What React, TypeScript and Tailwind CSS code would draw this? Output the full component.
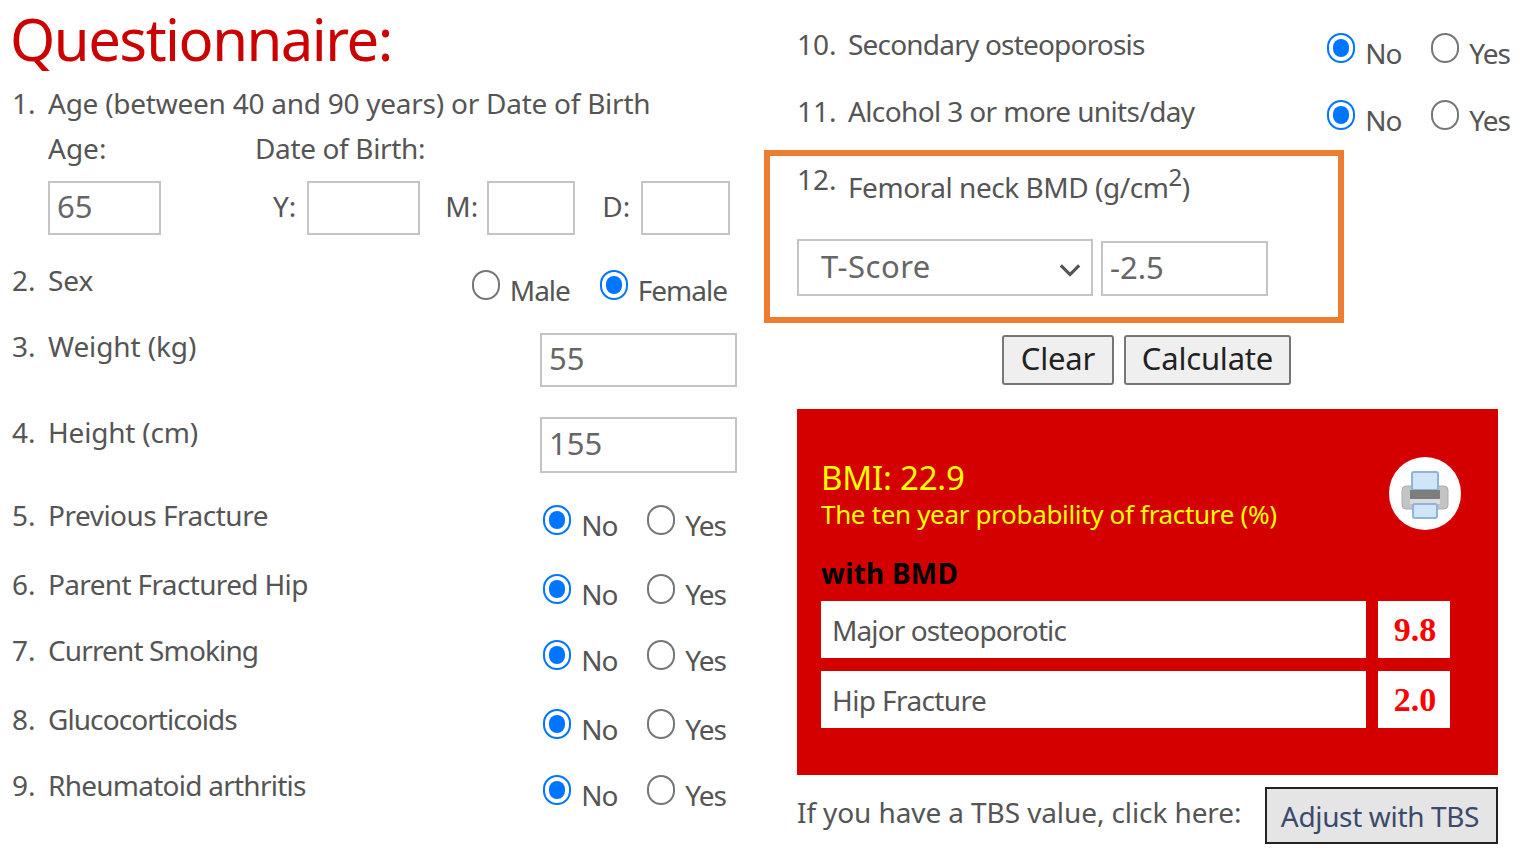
import React from 'react';

const Radio = ({ checked, label, width }: { checked?: boolean; label: string; width?: string }) => (
  <div className={`flex items-start gap-[10px] ${width ?? ''}`}>
    <span
      className={`mt-[-5px] h-[30px] w-[28px] shrink-0 rounded-full border-2 bg-white ${
        checked ? 'border-[#0075ff] p-[4px]' : 'border-[#767676]'
      }`}
    >
      {checked && <span className="block h-full w-full rounded-full bg-[#0075ff]" />}
    </span>
    <span className="text-[#555] leading-[30px] tracking-[-1px] whitespace-nowrap">{label}</span>
  </div>
);

const Question = ({
  n,
  text,
  height,
  track,
  numWidth = 'w-[36px]',
  children,
}: {
  n: string;
  text: string;
  height: string;
  track: string;
  numWidth?: string;
  children?: React.ReactNode;
}) => (
  <div className={`flex items-start ${height}`}>
    <span className={`shrink-0 ${numWidth}`}>{n}</span>
    <span className={`whitespace-nowrap ${track}`}>{text}</span>
    <div className="ml-auto">{children}</div>
  </div>
);

const NoYes = () => (
  <div className="flex pt-[12px]">
    <Radio checked label="No" width="w-[104px]" />
    <Radio label="Yes" />
  </div>
);

const Box = ({ value, className }: { value?: string; className: string }) => (
  <input
    readOnly
    value={value ?? ''}
    className={`border-2 border-[#c4c4c4] bg-white px-[7px] pb-[4px] text-[31px] text-[#666] outline-none ${className}`}
  />
);

const ResultRow = ({ label, value, track }: { label: string; value: string; track: string }) => (
  <div className="flex gap-[12px]">
    <div className={`flex h-[57px] w-[545px] items-center bg-white pl-[11px] text-[#555] ${track}`}>{label}</div>
    <div className="flex h-[57px] w-[72px] items-center justify-center bg-white pl-[2px] font-['Liberation_Serif',serif] text-[34px] font-bold text-[#ff0000]">
      {value}
    </div>
  </div>
);

export default function App() {
  return (
    <div className="flex h-[861px] w-[1536px] overflow-hidden bg-white font-['Noto_Sans',sans-serif] text-[28px] leading-[36px] text-[#555]">
      {/* left column */}
      <div className="flex w-[764px] shrink-0 flex-col pl-[12px] pr-[27px]">
        <h1 className="ml-[-2px] h-[85px] pt-[2px] text-[58px] leading-[74px] tracking-[-1.5px] text-[#cc0000]">Questionnaire:</h1>
        <div className="flex h-[45px]">
          <span className="w-[36px]">1.</span>
          <span className="tracking-[-0.25px]">Age (between 40 and 90 years) or Date of Birth</span>
        </div>
        <div className="flex h-[51px] pl-[36px]">
          <span className="w-[207px]">Age:</span>
          <span className="tracking-[-0.36px]">Date of Birth:</span>
        </div>
        <div className="flex h-[81px] items-start pl-[36px]">
          <Box value="65" className="h-[54px] w-[113px]" />
          <span className="ml-[112px] mr-[11px] pt-[7px]">Y:</span>
          <Box className="h-[54px] w-[113px]" />
          <span className="ml-[25px] mr-[9px] pt-[7px]">M:</span>
          <Box className="h-[54px] w-[88px]" />
          <span className="ml-[27px] mr-[11px] pt-[7px]">D:</span>
          <Box className="h-[54px] w-[89px]" />
        </div>
        <Question n="2." text="Sex" track="tracking-normal" height="h-[66px]">
          <div className="flex pt-[13px] pr-[10px]">
            <Radio label="Male" width="w-[128px]" />
            <Radio checked label="Female" />
          </div>
        </Question>
        <Question n="3." text="Weight (kg)" track="tracking-[-0.1px]" height="h-[86px]">
          <div className="pt-[5px]"><Box value="55" className="h-[54px] w-[197px]" /></div>
        </Question>
        <Question n="4." text="Height (cm)" track="tracking-[-0.2px]" height="h-[83px]">
          <div className="pt-[3px]"><Box value="155" className="h-[56px] w-[197px]" /></div>
        </Question>
        <Question n="5." text="Previous Fracture" track="tracking-[-0.5px]" height="h-[69px]">
          <div className="pr-[11px] pt-[1px]"><NoYes /></div>
        </Question>
        <Question n="6." text="Parent Fractured Hip" track="tracking-[-0.65px]" height="h-[66px]">
          <div className="pr-[11px] pt-[1px]"><NoYes /></div>
        </Question>
        <Question n="7." text="Current Smoking" track="tracking-[-0.87px]" height="h-[69px]">
          <div className="pr-[11px] pt-[1px]"><NoYes /></div>
        </Question>
        <Question n="8." text="Glucocorticoids" track="tracking-[-0.93px]" height="h-[66px]">
          <div className="pr-[11px] pt-[1px]"><NoYes /></div>
        </Question>
        <Question n="9." text="Rheumatoid arthritis" track="tracking-[-0.75px]" height="h-[60px]">
          <div className="pr-[11px] pt-[1px]"><NoYes /></div>
        </Question>
      </div>

      {/* right column */}
      <div className="flex flex-1 flex-col pt-[26px]">
        <div className="pl-[33px] pr-[26px]">
          <Question n="10." numWidth="w-[51px]" text="Secondary osteoporosis" track="tracking-[-0.8px]" height="h-[67px]"><NoYes /></Question>
          <Question n="11." numWidth="w-[51px]" text="Alcohol 3 or more units/day" track="tracking-[-0.63px]" height="h-[57px]"><NoYes /></Question>
        </div>
        <div className="h-[173px] w-[580px] border-[6px] border-[#ed7d31] pl-[27px] pt-[5px]">
          <div className="flex h-[78px] items-start">
            <span className="w-[51px]">12.</span>
            <span className="pt-[8px] tracking-[-0.45px]">
              Femoral neck BMD (g/cm<sup className="text-[24px] leading-none">2</sup>)
            </span>
          </div>
          <div className="flex items-end gap-[8px]">
            <div className="relative">
              <select className="h-[57px] w-[296px] appearance-none border-2 border-[#c4c4c4] bg-white pb-[4px] pl-[22px] text-[31px] tracking-[0.5px] text-[#666] outline-none">
                <option>T-Score</option>
              </select>
              <svg className="absolute right-[12px] top-[24px] h-[14px] w-[22px]" viewBox="0 0 24 14" fill="none" stroke="#555" strokeWidth="3.5">
                <path d="M2 2l10 10L22 2" />
              </svg>
            </div>
            <Box value="-2.5" className="h-[55px] w-[167px]" />
          </div>
        </div>
        <div className="flex h-[86px] gap-[10px] pl-[238px] pt-[12px] text-[31px] tracking-[-0.2px]">
          <button className="h-[50px] w-[112px] rounded-[3px] border-2 border-[#767676] bg-[#efefef] pb-[4px] text-[#222]">Clear</button>
          <button className="h-[50px] w-[167px] rounded-[3px] border-2 border-[#767676] bg-[#efefef] pb-[4px] text-[#222]">Calculate</button>
        </div>
        <div className="ml-[33px] h-[366px] w-[701px] bg-[#d40000] pl-[24px] pt-[50px]">
          <div className="flex h-[76px] items-start pr-[37px]">
            <div>
              <div className="h-[37px] text-[33px] leading-[38px] tracking-[-0.2px] text-[#ffff00]">BMI: 22.9</div>
              <div className="text-[26px] tracking-[-0.33px] text-[#ffff00]">The ten year probability of fracture (%)</div>
            </div>
            <div className="ml-auto mt-[-2px] flex h-[73px] w-[72px] items-center justify-center rounded-full bg-white">
              <svg width="48" height="50" viewBox="0 0 48 50" className="blur-[0.7px]">
                <rect x="1" y="17" width="46" height="23" rx="4" fill="#c4c4c4" stroke="#adadad" />
                <rect x="11" y="3" width="26" height="18" rx="2" fill="#cfe6fa" stroke="#8fb3d9" strokeWidth="2" />
                <rect x="9" y="21" width="30" height="9" fill="#7d7d7d" />
                <rect x="9" y="30" width="30" height="5" fill="#dcdcdc" />
                <rect x="12" y="35" width="24" height="14" rx="2" fill="#cfe6fa" stroke="#8fb3d9" strokeWidth="2" />
              </svg>
            </div>
          </div>
          <div className="mt-[20px] h-[46px] font-bold tracking-[0.2px] text-black">with BMD</div>
          <div className="flex flex-col gap-[13px]">
            <ResultRow label="Major osteoporotic" value="9.8" track="tracking-[-0.9px]" />
            <ResultRow label="Hip Fracture" value="2.0" track="tracking-[-0.6px]" />
          </div>
        </div>
        <div className="ml-[33px] mt-[12px] flex w-[701px] items-start justify-between">
          <span className="pt-[7px] tracking-[-0.1px]">If you have a TBS value, click here:</span>
          <button className="h-[57px] w-[233px] border-2 border-[#222] bg-[#e5e5e5] pr-[3px] tracking-[-0.35px] text-[#3b4a6b]">Adjust with TBS</button>
        </div>
      </div>
    </div>
  );
}
